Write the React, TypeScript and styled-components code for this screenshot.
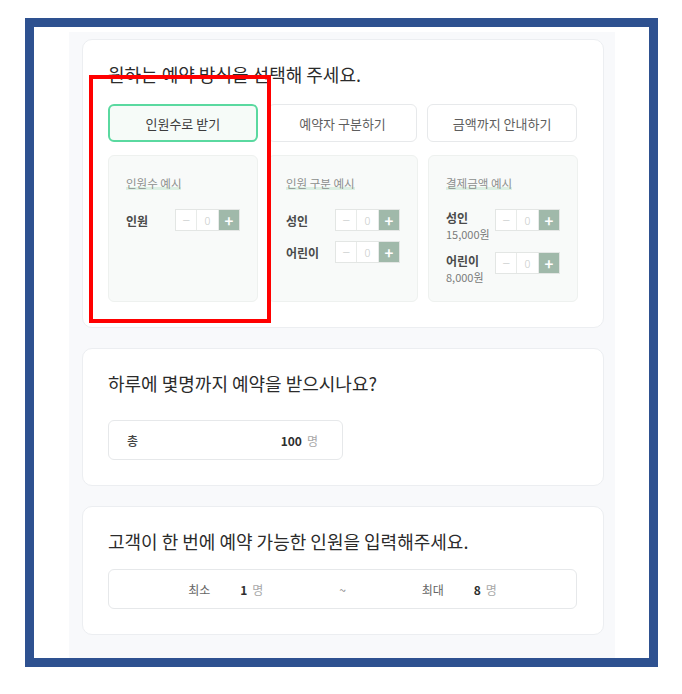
import React from "react";
import styled, { createGlobalStyle } from "styled-components";

const Global = createGlobalStyle`
  html, body { margin: 0; padding: 0; background: #ffffff; }
  body { font-family: "Noto Sans CJK KR", "Noto Sans", sans-serif; color: #333; }
  * { box-sizing: border-box; }
`;

const Stage = styled.div`
  position: relative;
  width: 682px;
  height: 694px;
  padding: 18px 0 0 25px;
`;

const Frame = styled.div`
  width: 633px;
  height: 649px;
  border: 9px solid #2e5190;
  background: #ffffff;
  padding: 5px 34px 0 35px;
  display: flex;
  flex-direction: column;
`;

const Panel = styled.div`
  flex: 1;
  background: #f8f9fb;
  padding: 7px 11px 0 13px;
  display: flex;
  flex-direction: column;
  gap: 20px;
`;

const Card = styled.section`
  background: #ffffff;
  border: 1px solid #eceef1;
  border-radius: 10px;
  padding: 22px 26px 25px 25px;
`;

const Title = styled.h2<{ $gap: number }>`
  margin: 0 0 ${(p) => p.$gap}px;
  font-size: 18px;
  line-height: 24px;
  font-weight: 400;
  color: #2b2b2b;
`;

const Tabs = styled.div`
  display: grid;
  grid-template-columns: repeat(3, 1fr);
  gap: 10px;
`;

const Tab = styled.button<{ $active?: boolean }>`
  height: 38px;
  border-radius: 6px;
  border: ${(p) => (p.$active ? "2px solid #5ad9a0" : "1px solid #e7e9eb")};
  background: ${(p) => (p.$active ? "#f6fbf8" : "#ffffff")};
  color: ${(p) => (p.$active ? "#3c3c3c" : "#5e5e5e")};
  font-family: inherit;
  font-size: 13px;
  padding: 0;
`;

const Examples = styled.div`
  display: grid;
  grid-template-columns: repeat(3, 1fr);
  gap: 10px;
  margin-top: 13px;
`;

const Example = styled.div`
  height: 147px;
  background: #f8faf9;
  border: 1px solid #eef1ef;
  border-radius: 6px;
  padding: 19px 17px;
  display: flex;
  flex-direction: column;
  align-items: flex-start;
`;

const ExampleLabel = styled.span`
  display: block;
  font-size: 11.5px;
  line-height: 16px;
  color: #8c8f8d;
  background: linear-gradient(transparent 12px, #dcefe3 12px, #dcefe3 15px, transparent 15px);
`;

const Rows = styled.div`
  margin-top: 18px;
  display: flex;
  flex-direction: column;
  gap: 10px;
`;

const Row = styled.div<{ $top?: boolean }>`
  display: flex;
  align-items: ${(p) => (p.$top ? "flex-start" : "center")};
`;

const NameBlock = styled.div`
  width: 49px;
  display: flex;
  flex-direction: column;
`;

const Name = styled.span`
  font-size: 12px;
  line-height: 17px;
  font-weight: 700;
  color: #4a4a4a;
`;

const Price = styled.span`
  font-size: 11px;
  line-height: 16px;
  color: #7a7a7a;
`;

const Stepper = styled.div`
  display: flex;
  width: 65px;
  height: 22px;
  border: 1px solid #e3e6e4;
  background: #ffffff;
`;

const Cell = styled.span<{ $kind: "minus" | "value" | "plus" }>`
  flex: 1;
  display: flex;
  align-items: center;
  justify-content: center;
  font-size: ${(p) => (p.$kind === "plus" ? "15px" : p.$kind === "minus" ? "14px" : "11px")};
  font-weight: ${(p) => (p.$kind === "plus" ? 700 : 300)};
  color: ${(p) => (p.$kind === "plus" ? "#ffffff" : "#c9cccb")};
  background: ${(p) => (p.$kind === "plus" ? "#a0b9aa" : "transparent")};
  border-left: ${(p) => (p.$kind === "value" ? "1px solid #e8ebe9" : "none")};
  border-right: ${(p) => (p.$kind === "value" ? "1px solid #e8ebe9" : "none")};
`;

const Field = styled.div<{ $width?: number; $centered?: boolean }>`
  width: ${(p) => (p.$width ? `${p.$width}px` : "100%")};
  height: 40px;
  border: 1px solid #e6e8ea;
  border-radius: 6px;
  background: #fff;
  display: flex;
  align-items: center;
  padding: ${(p) => (p.$centered ? "0" : "0 24px 0 18px")};
  font-size: 12px;
`;

const FieldLabel = styled.span`
  color: #444;
  font-weight: 500;
  flex: 1;
`;

const Value = styled.span`
  font-weight: 700;
  color: #2e2e2e;
`;

const Unit = styled.span`
  color: #a8a8a8;
  margin-left: 5px;
`;

const Half = styled.div`
  flex: 1;
  display: flex;
  justify-content: center;
  align-items: center;
`;

const RangeLabel = styled.span`
  color: #666;
  margin-right: 30px;
`;

const Tilde = styled.span`
  color: #888;
  width: 0;
  display: flex;
  justify-content: center;
`;

const Annotation = styled.div`
  position: absolute;
  left: 89px;
  top: 75px;
  width: 182px;
  height: 248px;
  border: 4px solid #ff0000;
  pointer-events: none;
`;

const StepBox = () => (
  <Stepper>
    <Cell $kind="minus">−</Cell>
    <Cell $kind="value">0</Cell>
    <Cell $kind="plus">+</Cell>
  </Stepper>
);

export default function App() {
  return (
    <>
      <Global />
      <Stage>
        <Frame>
          <Panel>
            <Card>
              <Title $gap={18}>원하는 예약 방식을 선택해 주세요.</Title>
              <Tabs>
                <Tab $active>인원수로 받기</Tab>
                <Tab>예약자 구분하기</Tab>
                <Tab>금액까지 안내하기</Tab>
              </Tabs>
              <Examples>
                <Example>
                  <ExampleLabel>인원수 예시</ExampleLabel>
                  <Rows>
                    <Row>
                      <NameBlock>
                        <Name>인원</Name>
                      </NameBlock>
                      <StepBox />
                    </Row>
                  </Rows>
                </Example>
                <Example>
                  <ExampleLabel>인원 구분 예시</ExampleLabel>
                  <Rows>
                    <Row>
                      <NameBlock>
                        <Name>성인</Name>
                      </NameBlock>
                      <StepBox />
                    </Row>
                    <Row>
                      <NameBlock>
                        <Name>어린이</Name>
                      </NameBlock>
                      <StepBox />
                    </Row>
                  </Rows>
                </Example>
                <Example>
                  <ExampleLabel>결제금액 예시</ExampleLabel>
                  <Rows>
                    <Row $top>
                      <NameBlock>
                        <Name>성인</Name>
                        <Price>15,000원</Price>
                      </NameBlock>
                      <StepBox />
                    </Row>
                    <Row $top>
                      <NameBlock>
                        <Name>어린이</Name>
                        <Price>8,000원</Price>
                      </NameBlock>
                      <StepBox />
                    </Row>
                  </Rows>
                </Example>
              </Examples>
            </Card>

            <Card>
              <Title $gap={25}>하루에 몇명까지 예약을 받으시나요?</Title>
              <Field $width={235}>
                <FieldLabel>총</FieldLabel>
                <Value>100</Value>
                <Unit>명</Unit>
              </Field>
            </Card>

            <Card>
              <Title $gap={16}>고객이 한 번에 예약 가능한 인원을 입력해주세요.</Title>
              <Field $centered>
                <Half>
                  <RangeLabel>최소</RangeLabel>
                  <Value>1</Value>
                  <Unit>명</Unit>
                </Half>
                <Tilde>~</Tilde>
                <Half>
                  <RangeLabel>최대</RangeLabel>
                  <Value>8</Value>
                  <Unit>명</Unit>
                </Half>
              </Field>
            </Card>
          </Panel>
        </Frame>
        <Annotation />
      </Stage>
    </>
  );
}
